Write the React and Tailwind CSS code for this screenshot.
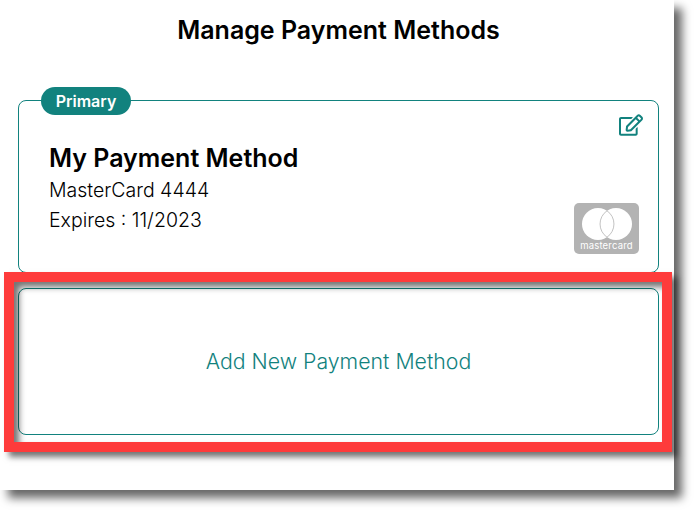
import React from 'react'
import { FaRegEdit } from 'react-icons/fa'

function MastercardLogo() {
  return (
    <div className="w-[65px] h-[51px] rounded-[5px] bg-[#b3b3b3] flex flex-col items-center pt-[5px]">
      <svg width="50" height="32" viewBox="0 0 50 32">
        <circle cx="16" cy="16" r="16" fill="#fff" />
        <circle cx="34" cy="16" r="16" fill="#fff" />
        <path d="M25 2.8A16 16 0 0 1 25 29.2A16 16 0 0 1 25 2.8z" fill="#fff" stroke="#b3b3b3" strokeWidth="0.8" />
      </svg>
      <span className="text-[9.5px] leading-[11px] text-white tracking-[0.2px]">mastercard</span>
    </div>
  )
}

export default function App() {
  return (
    <div className="w-[694px] h-[510px]">
      <div className="relative w-[674px] h-[490px] bg-white shadow-[8px_8px_9px_rgba(0,0,0,0.6)] font-['Inter',sans-serif] text-black">
        <h1 className="pt-[15px] pl-[3px] text-center text-[25px] leading-[30px] font-semibold">Manage Payment Methods</h1>

        <div className="mt-[55px] mx-[18px] w-[641px] flex flex-col gap-[15px]">
          <div className="relative h-[173px] rounded-[8px] border border-[#12827e] flex justify-between pl-[30px] pr-[15px] pt-[12px] pb-[18px]">
            <span className="absolute left-[22px] -top-[14px] h-[28px] w-[90px] flex items-center justify-center rounded-full bg-[#12827e] text-white text-[16px] font-semibold">
              Primary
            </span>
            <div className="pt-[30px]">
              <h2 className="text-[25px] leading-[30px] font-semibold">My Payment Method</h2>
              <p className="mt-[2px] text-[19.5px] leading-[30px] font-light">MasterCard 4444</p>
              <p className="text-[19.5px] leading-[30px] font-light">Expires : 11/2023</p>
            </div>
            <div className="flex flex-col items-end justify-between">
              <FaRegEdit className="text-[#12827e]" size={24} />
              <div className="mr-[4px]">
                <MastercardLogo />
              </div>
            </div>
          </div>

          <div className="h-[147px] rounded-[8px] border border-[#12827e] flex items-center justify-center text-[#12827e] text-[21.3px] font-light">
            Add New Payment Method
          </div>
        </div>

        {/* red annotation box */}
        <div className="absolute left-[4px] top-[272px] w-[668px] h-[180px] border-[10px] border-[#fe3b3b] shadow-[5px_5px_6px_rgba(0,0,0,0.55),inset_5px_5px_6px_rgba(0,0,0,0.55)]" />
      </div>
    </div>
  )
}
